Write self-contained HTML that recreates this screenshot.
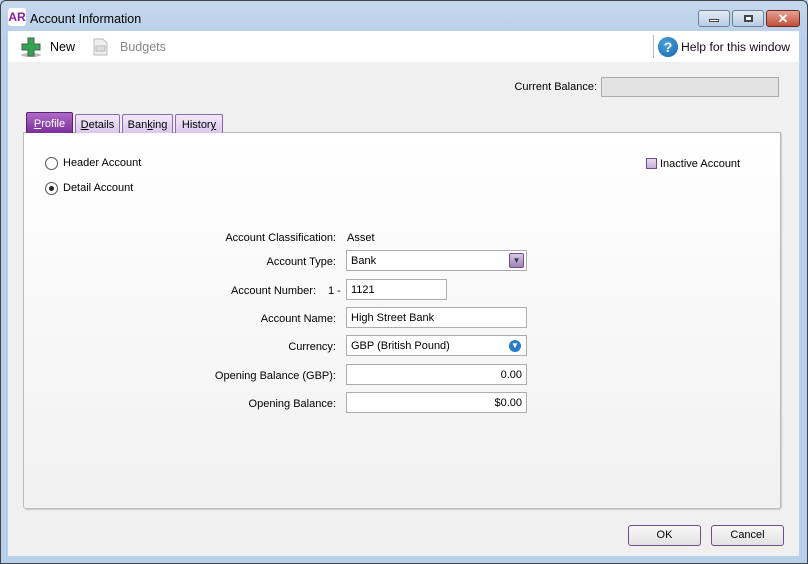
<!DOCTYPE html>
<html><head><style>
*{margin:0;padding:0;box-sizing:border-box}
body{width:808px;height:564px;overflow:hidden;font-family:"Liberation Sans",sans-serif;font-size:11px;color:#000;background:#b9d1ea;position:relative}
.a{position:absolute;white-space:nowrap}
.win{left:0;top:0;width:808px;height:564px;background:linear-gradient(#c4d7ec,#b8d0ea 40px);border:1px solid #444;border-radius:6px 6px 0 0}
.inp{position:absolute;background:#fff;border:1px solid #abadb3;height:21px;padding:4px 4px;font-size:11px}
.lbl{position:absolute;text-align:right;width:200px}
.tab{position:absolute;top:114px;height:19px;border:1px solid #8a6aa8;border-bottom:none;background:linear-gradient(#f3e8fa,#dcc6ee);padding:4px 0 0;text-align:center;font-size:11px;border-radius:2px 2px 0 0}
.btn{position:absolute;width:73px;height:21px;border:1px solid #6e4f8c;border-radius:3px;background:linear-gradient(#f8f8f8,#e2e2e2);text-align:center;line-height:19px}
.radio{position:absolute;width:13px;height:13px;border:1px solid #555;border-radius:50%;background:#fff}
</style></head><body>
<div class="a win"></div>
<div class="a" style="left:8px;top:8px;width:18px;height:18px;background:#fff;border-radius:3px;font-weight:bold;font-size:12px;color:#8b1a9e;line-height:18px;text-align:center">AR</div>
<div class="a" style="left:30px;top:12px;font-size:12.5px">Account Information</div>
<div class="a" style="left:698px;top:10px;width:32px;height:17px;border:1px solid #6c7f99;border-radius:3px;background:linear-gradient(#e2ebf5,#b9cce3)"><div class="a" style="left:10px;top:8px;width:10px;height:3px;background:#fff;border:1px solid #444"></div></div>
<div class="a" style="left:732px;top:10px;width:32px;height:17px;border:1px solid #6c7f99;border-radius:3px;background:linear-gradient(#e2ebf5,#b9cce3)"><div class="a" style="left:11px;top:4px;width:9px;height:7px;border:2px solid #444;background:#fff"></div></div>
<div class="a" style="left:766px;top:10px;width:34px;height:17px;border:1px solid #6d2a22;border-radius:3px;background:linear-gradient(#e7a394,#c04e3a);color:#fff;font-weight:bold;text-align:center;line-height:15px;font-size:13px">✕</div>
<div class="a" style="left:8px;top:31px;width:791px;height:31px;background:#fff"></div>
<div class="a" style="left:8px;top:62px;width:791px;height:494px;background:#f0f0f1"></div>
<svg class="a" style="left:20px;top:36px" width="22" height="22"><ellipse cx="11" cy="19" rx="10" ry="2" fill="#bbb"/><path d="M8 2h6v6h6v6h-6v6h-6v-6h-6v-6h6z" fill="#2fa84f" stroke="#555" stroke-width="1"/></svg>
<div class="a" style="left:50px;top:40px;font-size:12.5px">New</div>
<svg class="a" style="left:90px;top:37px" width="20" height="20"><path d="M4 2h9l4 4v12h-13z" fill="#eee" stroke="#bbb"/><rect x="6" y="9" width="9" height="5" fill="#ddd" stroke="#bbb"/></svg>
<div class="a" style="left:120px;top:40px;font-size:12.5px;color:#888">Budgets</div>
<div class="a" style="left:653px;top:35px;width:1px;height:23px;background:#bbb"></div>
<div class="a" style="left:658px;top:37px;width:20px;height:20px;border-radius:50%;background:radial-gradient(circle at 40% 35%,#4aa3e0,#1464a8);color:#fff;font-weight:bold;text-align:center;line-height:20px;font-size:14px">?</div>
<div class="a" style="left:681px;top:40px;font-size:12.2px;color:#1a0a1a">Help for this window</div>
<div class="lbl" style="left:397px;top:81px">Current Balance:</div>
<div class="a" style="left:601px;top:77px;width:178px;height:20px;background:#e3e3e3;border:1px solid #aaa"></div>
<div class="a" style="left:23px;top:132px;width:758px;height:377px;background:linear-gradient(#fff,#f1f1f2);border:1px solid #bbb;border-radius:0 0 3px 3px;box-shadow:1px 1px 1px #ccc"></div>
<div class="tab" style="left:26px;top:112px;width:47px;height:21px;background:linear-gradient(#b06ac6,#7a2f99);color:#fff;border-color:#5b1f78;padding-top:5px"><u>P</u>rofile</div>
<div class="tab" style="left:75px;width:45px"><u>D</u>etails</div>
<div class="tab" style="left:122px;width:51px">Ban<u>k</u>ing</div>
<div class="tab" style="left:175px;width:48px">Histor<u>y</u></div>
<div class="radio" style="left:45px;top:157px"></div><div class="a" style="left:63px;top:157px">Header Account</div>
<div class="radio" style="left:45px;top:182px"><div class="a" style="left:3px;top:3px;width:5px;height:5px;border-radius:50%;background:#222"></div></div><div class="a" style="left:63px;top:182px">Detail Account</div>
<div class="a" style="left:646px;top:158px;width:11px;height:11px;border:1px solid #6e4f8c;background:linear-gradient(#e8dcf0,#c7b0da)"></div><div class="a" style="left:660px;top:158px">Inactive Account</div>
<div class="lbl" style="left:136px;top:232px">Account Classification:</div><div class="a" style="left:347px;top:232px">Asset</div>
<div class="lbl" style="left:136px;top:256px">Account Type:</div>
<div class="inp" style="left:346px;top:250px;width:181px">Bank</div>
<div class="a" style="left:509px;top:253px;width:15px;height:15px;border:1px solid #6e4f8c;border-radius:2px;background:linear-gradient(#d8c8e6,#9f80bb);color:#333;font-size:9px;text-align:center;line-height:13px">▾</div>
<div class="lbl" style="left:116px;top:285px">Account Number:</div><div class="a" style="left:328px;top:285px">1 -</div>
<div class="inp" style="left:346px;top:279px;width:101px">1121</div>
<div class="lbl" style="left:136px;top:313px">Account Name:</div>
<div class="inp" style="left:346px;top:307px;width:181px">High Street Bank</div>
<div class="lbl" style="left:136px;top:341px">Currency:</div>
<div class="inp" style="left:346px;top:335px;width:181px">GBP (British Pound)</div>
<div class="a" style="left:509px;top:340px;width:12px;height:12px;border-radius:50%;background:#2a7cc4;color:#fff;font-size:8px;text-align:center;line-height:12px">▼</div>
<div class="lbl" style="left:136px;top:370px">Opening Balance (GBP):</div>
<div class="inp" style="left:346px;top:364px;width:181px;text-align:right">0.00</div>
<div class="lbl" style="left:136px;top:398px">Opening Balance:</div>
<div class="inp" style="left:346px;top:392px;width:181px;text-align:right">$0.00</div>
<div class="btn" style="left:628px;top:525px">OK</div>
<div class="btn" style="left:711px;top:525px">Cancel</div>
</body></html>
